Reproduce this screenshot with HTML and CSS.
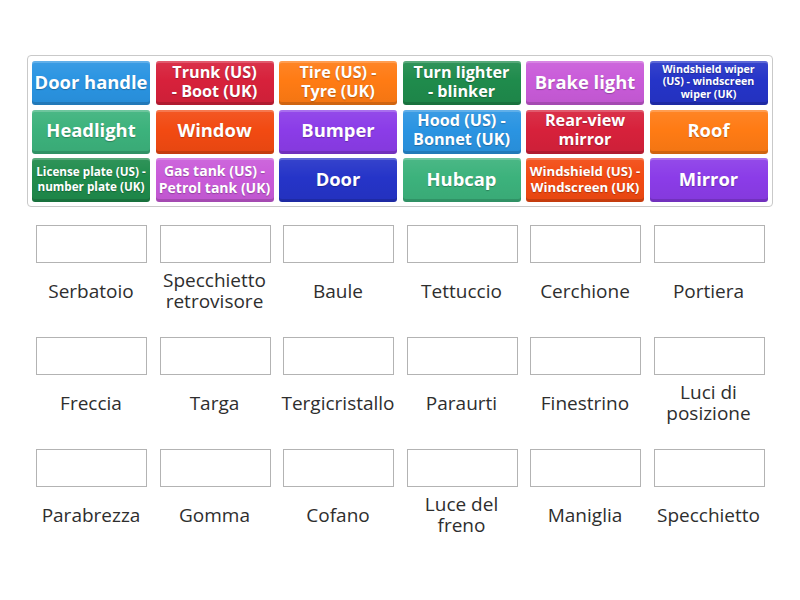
FILE: index.html
```html
<!DOCTYPE html>
<html>
<head>
<meta charset="utf-8">
<link rel="stylesheet" href="styles.css">
</head>
<body>
<div class="page">
  <div class="bank">
    <div class="tile blue s18">Door handle</div>
    <div class="tile red s16">Trunk (US)<br>- Boot (UK)</div>
    <div class="tile orange s16">Tire (US) -<br>Tyre (UK)</div>
    <div class="tile green s16">Turn lighter<br>- blinker</div>
    <div class="tile orchid s18">Brake light</div>
    <div class="tile navy s11">Windshield wiper<br>(US) - windscreen<br>wiper (UK)</div>

    <div class="tile teal s18">Headlight</div>
    <div class="tile flame s18">Window</div>
    <div class="tile purple s18">Bumper</div>
    <div class="tile blue s16">Hood (US) -<br>Bonnet (UK)</div>
    <div class="tile red s16">Rear-view<br>mirror</div>
    <div class="tile orange s18">Roof</div>

    <div class="tile green s115">License plate (US) -<br>number plate (UK)</div>
    <div class="tile orchid s14">Gas tank (US) -<br>Petrol tank (UK)</div>
    <div class="tile navy s18">Door</div>
    <div class="tile teal s18">Hubcap</div>
    <div class="tile flame s13">Windshield (US) -<br>Windscreen (UK)</div>
    <div class="tile purple s18">Mirror</div>
  </div>

  <div class="targets">
    <div class="cell"><div class="box"></div><div class="label">Serbatoio</div></div>
    <div class="cell"><div class="box"></div><div class="label">Specchietto<br>retrovisore</div></div>
    <div class="cell"><div class="box"></div><div class="label">Baule</div></div>
    <div class="cell"><div class="box"></div><div class="label">Tettuccio</div></div>
    <div class="cell"><div class="box"></div><div class="label">Cerchione</div></div>
    <div class="cell"><div class="box"></div><div class="label">Portiera</div></div>

    <div class="cell"><div class="box"></div><div class="label">Freccia</div></div>
    <div class="cell"><div class="box"></div><div class="label">Targa</div></div>
    <div class="cell"><div class="box"></div><div class="label">Tergicristallo</div></div>
    <div class="cell"><div class="box"></div><div class="label">Paraurti</div></div>
    <div class="cell"><div class="box"></div><div class="label">Finestrino</div></div>
    <div class="cell"><div class="box"></div><div class="label">Luci di<br>posizione</div></div>

    <div class="cell"><div class="box"></div><div class="label">Parabrezza</div></div>
    <div class="cell"><div class="box"></div><div class="label">Gomma</div></div>
    <div class="cell"><div class="box"></div><div class="label">Cofano</div></div>
    <div class="cell"><div class="box"></div><div class="label">Luce del<br>freno</div></div>
    <div class="cell"><div class="box"></div><div class="label">Maniglia</div></div>
    <div class="cell"><div class="box"></div><div class="label">Specchietto</div></div>
  </div>
</div>
</body>
</html>
```

FILE: styles.css
```css
html, body {
  margin: 0;
  padding: 0;
  background: #ffffff;
  font-family: "Open Sans", "Liberation Sans", sans-serif;
}

.page {
  padding: 55px 0 0 27px;
}

.bank {
  display: inline-grid;
  grid-template-columns: repeat(6, 118px);
  grid-auto-rows: 44px;
  column-gap: 5.5px;
  row-gap: 4.5px;
  padding: 5px 4px 4px 4px;
  border: 1px solid #c9c9c9;
  border-radius: 4px;
}

.tile {
  display: flex;
  align-items: center;
  justify-content: center;
  box-sizing: border-box;
  padding-bottom: 3px;
  text-align: center;
  color: #ffffff;
  font-weight: 700;
  border-radius: 3px;
  text-shadow: 0 1px 1px rgba(0, 0, 0, 0.25);
  box-shadow: inset 0 2px 0 rgba(255, 255, 255, 0.2), inset 0 -3px 0 rgba(0, 0, 0, 0.14);
  background-image: linear-gradient(to bottom, rgba(255,255,255,0.08), rgba(255,255,255,0) 45%, rgba(0,0,0,0.05));
}

.s18 { font-size: 18.4px; line-height: 20px; }
.s16 { font-size: 16.2px; line-height: 19px; }
.s14 { font-size: 14px; line-height: 17px; }
.s13 { font-size: 13.2px; line-height: 16px; }
.s115 { font-size: 11.7px; line-height: 14.5px; }
.s11 { font-size: 10.7px; line-height: 12.5px; }

.blue { background-color: #2a94e2; }
.red { background-color: #d7213b; }
.orange { background-color: #ff7b14; }
.green { background-color: #1f8b4c; }
.orchid { background-color: #c95bd9; }
.navy { background-color: #2534c8; }
.teal { background-color: #3cb27c; }
.flame { background-color: #f24a12; }
.purple { background-color: #8b3ce8; }

.targets {
  display: grid;
  grid-template-columns: repeat(6, 118px);
  column-gap: 5.5px;
  row-gap: 18px;
  margin: 18px 0 0 5px;
}

.cell {
  display: flex;
  flex-direction: column;
}

.box {
  height: 36px;
  margin: 0 3px 0 4px;
  border: 1px solid #b3b3b3;
  background: #ffffff;
}

.label {
  height: 56px;
  display: flex;
  align-items: center;
  justify-content: center;
  text-align: center;
  font-size: 19px;
  line-height: 21px;
  color: #2e2e2e;
}
```
